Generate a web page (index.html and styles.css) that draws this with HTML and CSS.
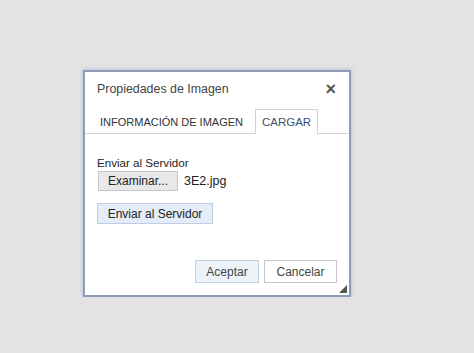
FILE: index.html
```html
<!DOCTYPE html>
<html lang="es">
<head>
  <meta charset="UTF-8">
  <title>Propiedades de Imagen</title>
  <link rel="stylesheet" href="styles.css">
</head>
<body>
  <div class="dialog">
    <div class="dialog-header">
      <span class="dialog-title">Propiedades de Imagen</span>
      <span class="close">&times;</span>
    </div>

    <div class="tabs">
      <span class="tab">INFORMACIÓN DE IMAGEN</span>
      <span class="tab active">CARGAR</span>
    </div>

    <div class="dialog-body">
      <div class="field-label">Enviar al Servidor</div>
      <div class="file-row">
        <button class="btn">Examinar...</button>
        <span class="file-name">3E2.jpg</span>
      </div>
      <button class="btn btn-send">Enviar al Servidor</button>
    </div>

    <div class="dialog-footer">
      <button class="btn btn-ok">Aceptar</button>
      <button class="btn btn-cancel">Cancelar</button>
    </div>

    <span class="resize"></span>
  </div>
</body>
</html>
```

FILE: styles.css
```css
body {
  margin: 0;
  padding: 70px 0 0 83px;
  background-color: #e3e3e3;
  font-family: "Liberation Sans", Arial, sans-serif;
  color: #333;
}
.dialog {
  position: relative;
  box-sizing: border-box;
  width: 268px;
  height: 227px;
  background-color: #fff;
  border: 2px solid #8c9db5;
  box-shadow: 0 0 4px rgba(120, 150, 200, 0.6);
  display: flex;
  flex-direction: column;
}
.dialog-header {
  display: flex;
  justify-content: space-between;
  align-items: center;
  height: 33px;
  padding: 0 13px 4px 12px;
}
.dialog-title {
  font-size: 12.4px;
  color: #444;
}
.close {
  font-size: 18px;
  line-height: 16px;
  color: #555;
  font-weight: bold;
}
.tabs {
  display: flex;
  align-items: flex-end;
  height: 24px;
  border-bottom: 1px solid #d3d3d3;
  padding-left: 14px;
}
.tab {
  font-size: 11px;
  color: #333;
  height: 24px;
  line-height: 24px;
  box-sizing: border-box;
  padding: 0 11px 0 0;
  border: 1px solid transparent;
  border-bottom: none;
}
.tab.active {
  width: 63px;
  text-align: center;
  font-size: 11.5px;
  color: #3a536d;
  background-color: #fff;
  border-color: #d3d3d3;
  padding: 0;
  margin-bottom: -1px;
  height: 25px;
  line-height: 24px;
}
.dialog-body {
  padding: 22px 12px 0 12px;
  flex: 1;
}
.field-label {
  font-size: 11.6px;
  color: #222;
  line-height: 14px;
}
.file-row {
  display: flex;
  align-items: center;
  gap: 6px;
  margin-top: 1px;
  margin-left: 1px;
}
.file-name {
  font-size: 12.5px;
  color: #222;
}
.btn {
  font-family: "Liberation Sans", Arial, sans-serif;
  font-size: 12px;
  color: #222;
  background-color: #e8e8e8;
  border: 1px solid #c6c6c6;
  padding: 0 9px;
  height: 20px;
}
.btn-send {
  margin-top: 12px;
  height: 21px;
  width: 116px;
  background-color: #e3ecf8;
  border-color: #bfcde0;
}
.dialog-footer {
  display: flex;
  justify-content: flex-end;
  gap: 5px;
  padding: 0 12px 12px 0;
}
.btn-ok,
.btn-cancel {
  height: 23px;
  font-size: 12px;
  color: #444;
}
.btn-ok {
  width: 64px;
  background-color: #eef3f9;
  border-color: #c2d0e0;
}
.btn-cancel {
  width: 73px;
  background-color: #fff;
  border-color: #c6c6c6;
}
.resize {
  position: absolute;
  right: 2px;
  bottom: 2px;
  width: 0;
  height: 0;
  border-left: 8px solid transparent;
  border-bottom: 8px solid #555;
}
```
